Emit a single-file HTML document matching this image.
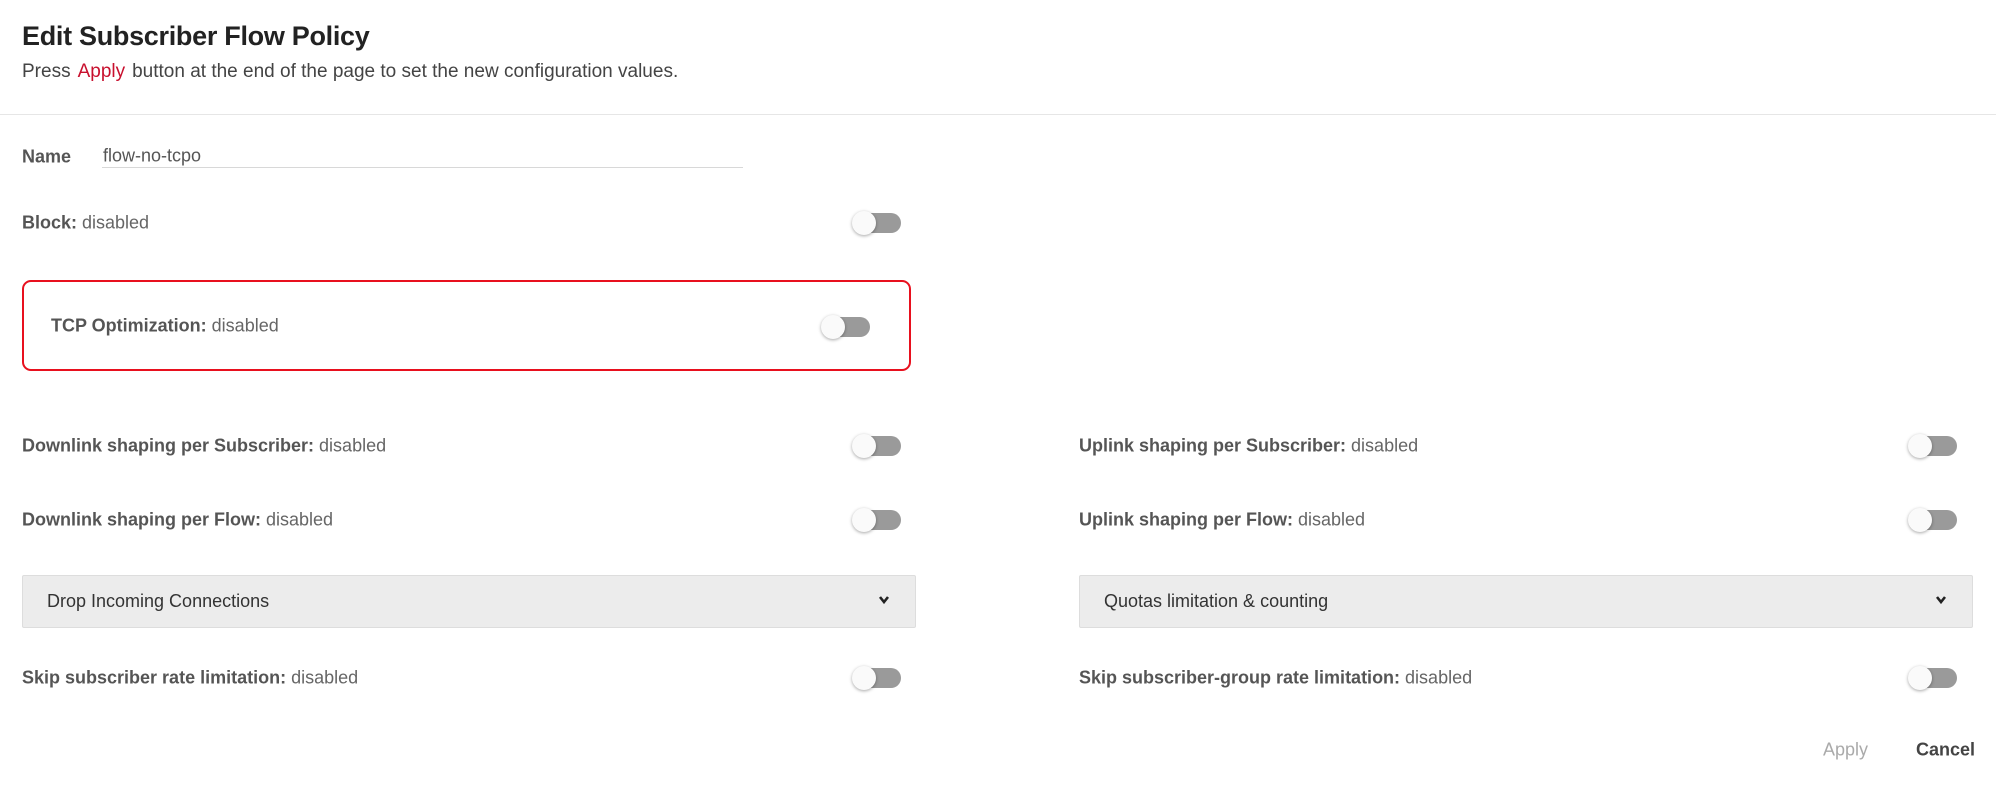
<!DOCTYPE html>
<html><head><meta charset="utf-8"><style>
*{box-sizing:border-box;margin:0;padding:0}
body{width:1996px;height:797px;background:#fff;font-family:"Liberation Sans",sans-serif;color:#555;position:relative;overflow:hidden}
.a{position:absolute;white-space:nowrap}
h1{position:absolute;left:22px;top:21px;font-size:27px;font-weight:bold;color:#222;letter-spacing:-0.3px}
.sub{left:22px;top:61px;font-size:19px;color:#444}
.sub span{color:#c8102e;margin:0 7px}
.hr{position:absolute;left:0;top:114px;width:1996px;height:1px;background:#e6e6e6}
.lbl{font-size:18px;color:#666;transform:translateY(-50%)}
.lbl b{color:#555}
.tg{position:absolute;width:52px;height:26px;transform:translateY(-50%)}
.tg .tr{position:absolute;left:10px;top:3px;width:40px;height:20px;border-radius:10px;background:#9a9a9a}
.tg .kn{position:absolute;left:1px;top:1px;width:24px;height:24px;border-radius:50%;background:#fafafa;box-shadow:0 1px 3px rgba(0,0,0,.35)}
.box{position:absolute;left:22px;top:280px;width:889px;height:91px;border:2px solid #e8101e;border-radius:9px}
.dd{position:absolute;top:575px;height:53px;background:#ececec;border:1px solid #ddd;border-radius:2px;font-size:18px;color:#333;padding-left:24px;line-height:51px}
.dd svg{position:absolute;top:19px}
</style></head><body>
<h1>Edit Subscriber Flow Policy</h1>
<div class="a sub">Press<span>Apply</span>button at the end of the page to set the new configuration values.</div>
<div class="hr"></div>
<div class="a lbl" style="left:22px;top:157px;font-weight:bold;color:#555">Name</div>
<div class="a lbl" style="left:103px;top:156px;color:#555">flow-no-tcpo</div>
<div class="a" style="left:102px;top:167px;width:641px;height:1px;background:#d8d8d8"></div>

<div class="a lbl" style="left:22px;top:223px"><b>Block:</b> disabled</div>
<div class="tg" style="left:851px;top:223px"><div class="tr"></div><div class="kn"></div></div>

<div class="box"></div>
<div class="a lbl" style="left:51px;top:326px"><b>TCP Optimization:</b> disabled</div>
<div class="tg" style="left:820px;top:327px"><div class="tr"></div><div class="kn"></div></div>

<div class="a lbl" style="left:22px;top:446px"><b>Downlink shaping per Subscriber:</b> disabled</div>
<div class="tg" style="left:851px;top:446px"><div class="tr"></div><div class="kn"></div></div>
<div class="a lbl" style="left:1079px;top:446px"><b>Uplink shaping per Subscriber:</b> disabled</div>
<div class="tg" style="left:1907px;top:446px"><div class="tr"></div><div class="kn"></div></div>

<div class="a lbl" style="left:22px;top:520px"><b>Downlink shaping per Flow:</b> disabled</div>
<div class="tg" style="left:851px;top:520px"><div class="tr"></div><div class="kn"></div></div>
<div class="a lbl" style="left:1079px;top:520px"><b>Uplink shaping per Flow:</b> disabled</div>
<div class="tg" style="left:1907px;top:520px"><div class="tr"></div><div class="kn"></div></div>

<div class="dd" style="left:22px;width:894px">Drop Incoming Connections<svg style="left:855px" width="12" height="10" viewBox="0 0 12 10"><path d="M2 2 L6 7 L10 2" stroke="#222" stroke-width="2.6" fill="none"/></svg></div>
<div class="dd" style="left:1079px;width:894px">Quotas limitation &amp; counting<svg style="left:855px" width="12" height="10" viewBox="0 0 12 10"><path d="M2 2 L6 7 L10 2" stroke="#222" stroke-width="2.6" fill="none"/></svg></div>

<div class="a lbl" style="left:22px;top:678px"><b>Skip subscriber rate limitation:</b> disabled</div>
<div class="tg" style="left:851px;top:678px"><div class="tr"></div><div class="kn"></div></div>
<div class="a lbl" style="left:1079px;top:678px"><b>Skip subscriber-group rate limitation:</b> disabled</div>
<div class="tg" style="left:1907px;top:678px"><div class="tr"></div><div class="kn"></div></div>

<div class="a lbl" style="left:1823px;top:750px;color:#aaa;font-size:18px">Apply</div>
<div class="a lbl" style="left:1916px;top:750px;color:#444;font-weight:bold;font-size:18px">Cancel</div>
</body></html>
